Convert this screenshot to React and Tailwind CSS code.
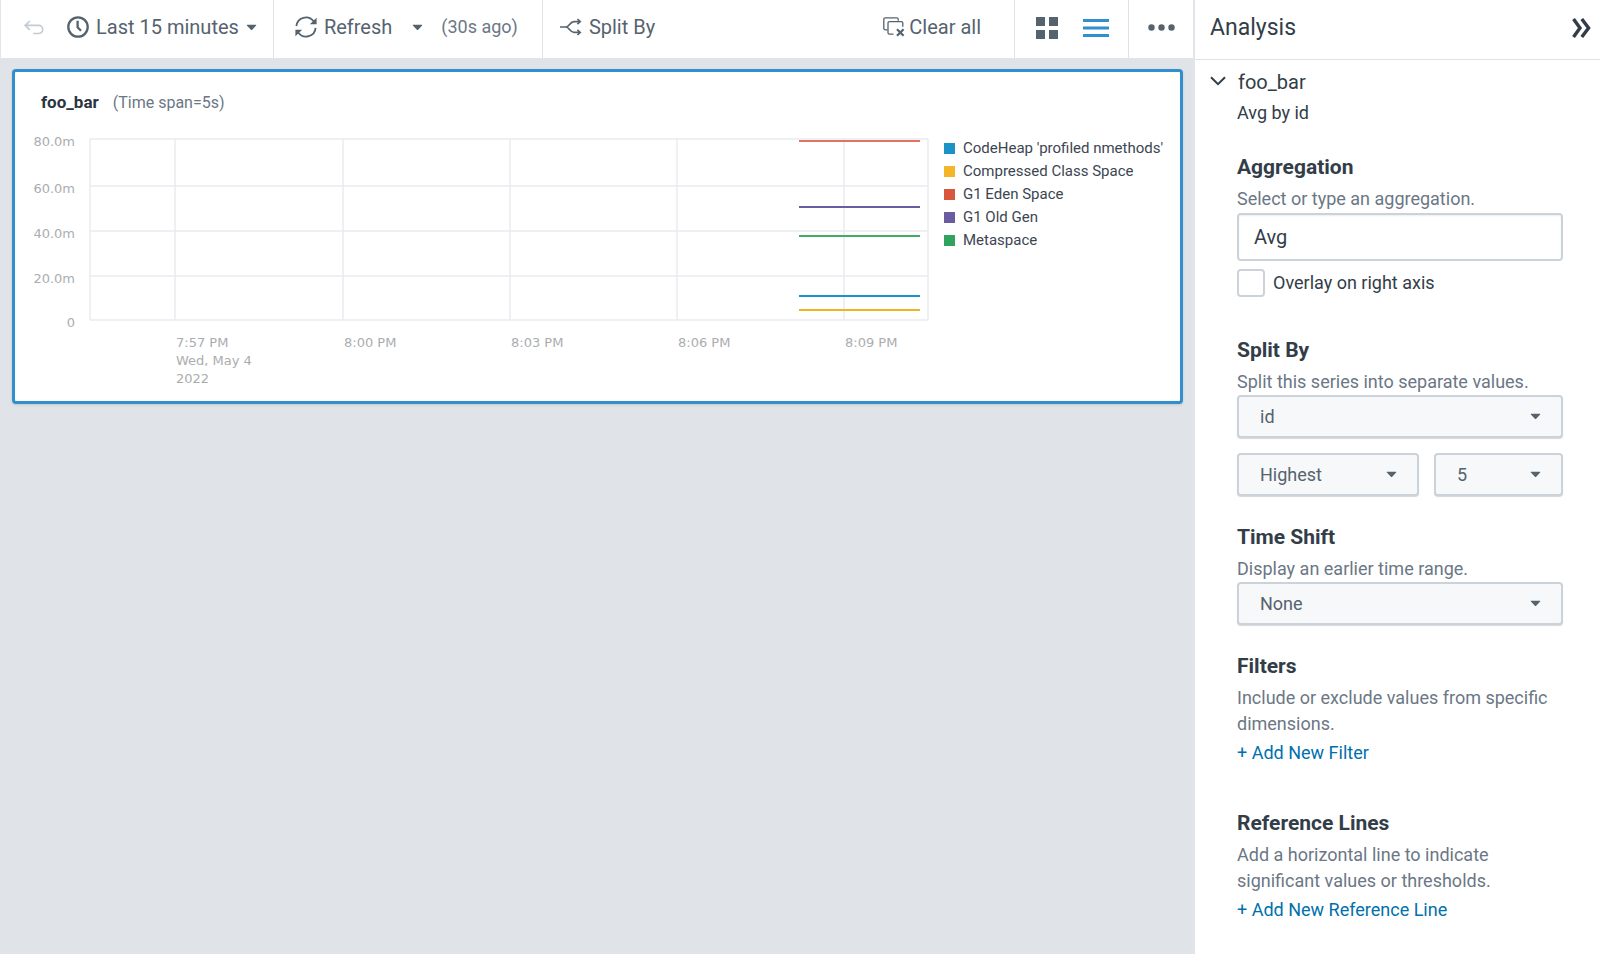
import { useState } from "react";

const series = [
  { name: "CodeHeap 'profiled nmethods'", y: 167, stroke: "#1a93c8", swatch: "bg-[#1a93c8]" },
  { name: "Compressed Class Space", y: 181, stroke: "#f0b323", swatch: "bg-[#f3b629]" },
  { name: "G1 Eden Space", y: 12, stroke: "#e0735f", swatch: "bg-[#d8573c]" },
  { name: "G1 Old Gen", y: 78, stroke: "#6b5ba0", swatch: "bg-[#6b5ba0]" },
  { name: "Metaspace", y: 107, stroke: "#41ac66", swatch: "bg-[#30a35f]" },
];

const yTicks = [
  { label: "80.0m", y: 10 },
  { label: "60.0m", y: 57 },
  { label: "40.0m", y: 102 },
  { label: "20.0m", y: 147 },
  { label: "0", y: 191 },
];

const xTicks = [
  { label: "7:57 PM", x: 145 },
  { label: "8:00 PM", x: 313 },
  { label: "8:03 PM", x: 480 },
  { label: "8:06 PM", x: 647 },
  { label: "8:09 PM", x: 814 },
];

function Caret({ className = "" }) {
  return (
    <svg viewBox="0 0 12 8" className={`h-[7px] w-[11px] shrink-0 ${className}`} fill="currentColor" aria-hidden="true">
      <path d="M1.2.8h9.6c.6 0 .9.6.5 1L6.8 6.6c-.4.5-1.1.5-1.5 0L.7 1.8c-.4-.4-.1-1 .5-1z" />
    </svg>
  );
}

function UndoIcon() {
  return (
    <svg viewBox="0 0 20 15" className="h-[15px] w-5" fill="none" stroke="currentColor" strokeWidth="1.7" aria-hidden="true">
      <path d="M5.8 1 1.2 5.4l4.6 4.4M1.2 5.4h13.4a4 4 0 0 1 0 8.1H9.2" />
    </svg>
  );
}

function ClockIcon() {
  return (
    <svg viewBox="0 0 22 22" className="size-[22px]" fill="none" stroke="currentColor" strokeWidth="2.3" aria-hidden="true">
      <circle cx="11" cy="11" r="9.700" />
      <path d="M10.600 4.800v6.500l3.400 3.400" />
    </svg>
  );
}

function RefreshIcon() {
  return (
    <svg viewBox="0 0 22 22" className="size-[22px]" fill="none" stroke="currentColor" strokeWidth="1.8" aria-hidden="true">
      <path d="M1.400 10.200A9.600 9.600 0 0 1 18.600 5.200M20.600 11.800A9.600 9.600 0 0 1 3.400 16.800" />
      <path d="M21.600 1.800v6.400h-6.800zM.4 20.200v-6.400h6.800z" fill="currentColor" stroke="none" />
    </svg>
  );
}

function SplitIcon() {
  return (
    <svg viewBox="0 0 22 18" className="h-[18px] w-[22px]" fill="none" stroke="currentColor" strokeWidth="1.7" aria-hidden="true">
      <path d="M0 9h5.800M20 3.600h-6C9.800 3.600 9.400 9 5.800 9c3.600 0 4 5.400 8.200 5.400h6" />
      <path d="m17.400 1 2.800 2.600-2.800 2.600M17.400 11.800l2.800 2.600-2.800 2.600" />
    </svg>
  );
}

function ClearIcon() {
  return (
    <svg viewBox="0 0 22 20" className="h-5 w-[22px]" fill="none" stroke="currentColor" aria-hidden="true">
      <path d="M4.500 12.800H2.200c-.8 0-1.400-.6-1.400-1.400V2.200c0-.8.6-1.400 1.400-1.400h11.600c.8 0 1.400.6 1.400 1.400v1.600" strokeWidth="1.300" />
      <path d="M10.500 17.200H6.400c-.8 0-1.400-.6-1.400-1.400V6c0-.8.6-1.400 1.400-1.400h12c.8 0 1.400.6 1.400 1.400v3.800" strokeWidth="1.300" />
      <path d="m14 12.200 6.600 6.600M20.600 12.200 14 18.800" strokeWidth="2.200" />
    </svg>
  );
}

function Toolbar({ view, onView }) {
  return (
    <header className="flex h-[58px] border-l border-[#e1e4e8] bg-white text-xl text-[#55636f]">
      <div className="flex items-center border-r border-[#dfe2e6] pr-4 pb-1 pl-[23px]">
        <button aria-label="Undo" className="text-[#c3cbd4]">
          <UndoIcon />
        </button>
        <button className="ml-[23px] flex items-center gap-[7px]">
          <ClockIcon />
          Last 15 minutes
          <Caret />
        </button>
      </div>
      <div className="flex items-center border-r border-[#dfe2e6] pr-6 pb-1 pl-[21px]">
        <button className="flex items-center gap-[7px]">
          <RefreshIcon />
          Refresh
        </button>
        <button aria-label="Refresh interval" className="ml-5">
          <Caret />
        </button>
        <span className="ml-[18px] text-lg text-[#6b7785]">(30s ago)</span>
      </div>
      <div className="flex flex-1 items-center justify-between pr-[33px] pb-1 pl-[17px]">
        <button className="flex items-center gap-[7px]">
          <SplitIcon />
          Split By
        </button>
        <button className="flex items-center gap-1">
          <ClearIcon />
          Clear all
        </button>
      </div>
      <div className="flex items-center gap-[25px] border-l border-[#dfe2e6] pr-[19px] pb-[3px] pl-[21px]">
        <button
          aria-label="Grid view"
          onClick={() => onView("grid")}
          className={view === "grid" ? "text-[#318fcb]" : "text-[#55636f]"}
        >
          <svg viewBox="0 0 22 22" className="size-[22px]" fill="currentColor" aria-hidden="true">
            <path d="M0 0h9v9H0zM13 0h9v9h-9zM0 13h9v9H0zM13 13h9v9h-9z" />
          </svg>
        </button>
        <button
          aria-label="List view"
          onClick={() => onView("list")}
          className={view === "list" ? "text-[#318fcb]" : "text-[#55636f]"}
        >
          <svg viewBox="0 0 26 20" className="h-5 w-[26px]" fill="currentColor" aria-hidden="true">
            <path d="M0 1h26v3H0zM0 8.500h26v3H0zM0 16h26v3H0z" />
          </svg>
        </button>
      </div>
      <div className="flex items-center border-l border-[#dfe2e6] pr-[18px] pb-[3px] pl-[19px]">
        <button aria-label="More actions">
          <svg viewBox="0 0 27 7" className="h-[7px] w-[27px]" fill="currentColor" aria-hidden="true">
            <circle cx="3.500" cy="3.500" r="3.200" />
            <circle cx="13.500" cy="3.500" r="3.200" />
            <circle cx="23.500" cy="3.500" r="3.200" />
          </svg>
        </button>
      </div>
    </header>
  );
}

function Chart() {
  return (
    <svg
      viewBox="0 0 904 272"
      className="min-w-0 flex-1 font-['DejaVu_Sans',sans-serif] text-[13px]"
      role="img"
      aria-label="foo_bar over the last 15 minutes"
    >
      <g stroke="#e9ebf0" strokeWidth="1.500">
        {yTicks.map((t) => (
          <line key={t.label} x1="60" x2="898" y1={t.y} y2={t.y} />
        ))}
        <line x1="60" x2="60" y1="10" y2="191" />
        {xTicks.map((t) => (
          <line key={t.label} x1={t.x} x2={t.x} y1="10" y2="191" />
        ))}
        <line x1="898" x2="898" y1="10" y2="191" />
      </g>
      <g fill="#aaadaf">
        {yTicks.map((t) => (
          <text key={t.label} x="45" y={t.y + 7} textAnchor="end">
            {t.label}
          </text>
        ))}
        {xTicks.map((t) => (
          <text key={t.label} x={t.x + 1} y="218">
            {t.label}
          </text>
        ))}
        <text x="146" y="236">Wed, May 4</text>
        <text x="146" y="254">2022</text>
      </g>
      {series.map((s) => (
        <line key={s.name} x1="769" x2="890" y1={s.y} y2={s.y} stroke={s.stroke} strokeWidth="2" />
      ))}
    </svg>
  );
}

function ChartCard() {
  return (
    <section className="mt-[11px] mr-2.5 mb-3 ml-3 rounded-sm border-3 border-[#318fcb] bg-white pl-[15px] shadow-sm">
      <h2 className="pt-[15px] pl-[11px] text-[17px] leading-[30px] text-[#6b7785]">
        <span className="mr-3.5 font-bold text-[#2a3541]">foo_bar</span>
        <span className="text-base">(Time span=5s)</span>
      </h2>
      <div className="mt-3 flex items-start">
        <Chart />
        <ul className="w-[246px] shrink-0 pt-2 pl-[10px] text-[15px] leading-[23px] text-[#3c4652]">
          {series.map((s) => (
            <li key={s.name} className="flex items-center gap-2 whitespace-nowrap">
              <span className={`size-[11px] shrink-0 ${s.swatch}`} />
              {s.name}
            </li>
          ))}
        </ul>
      </div>
    </section>
  );
}

function Section({ title, hint, className = "", children }) {
  return (
    <section className={className}>
      <h3 className="mb-1.5 text-[21px] leading-[26px] font-bold text-[#323d48]">{title}</h3>
      <p className="text-lg leading-[26px] text-[#6b7785]">{hint}</p>
      {children}
    </section>
  );
}

function Select({ label, options, className = "" }) {
  return (
    <div className={`relative ${className}`}>
      <select
        aria-label={label}
        className="block h-[43px] w-full appearance-none rounded border-2 border-[#cbd2da] bg-[#f7f8fa] pr-12 pl-[21px] text-lg text-[#55636f] shadow-[0_1px_1px_#d5d8dc]"
      >
        {options.map((o) => (
          <option key={o}>{o}</option>
        ))}
      </select>
      <Caret className="pointer-events-none absolute top-[18px] right-[22px] text-[#55636f]" />
    </div>
  );
}

function AnalysisPanel() {
  const [aggregation, setAggregation] = useState("Avg");
  const [overlay, setOverlay] = useState(false);

  return (
    <aside className="w-[407px] shrink-0 border-l-2 border-[#e1e4e8] bg-white text-[#323d48]">
      <div className="flex h-[60px] items-center justify-between border-b border-[#dfe2e6] pr-[9px] pb-[3px] pl-[15px]">
        <h1 className="text-[23px]">Analysis</h1>
        <button aria-label="Collapse panel">
          <svg viewBox="0 0 19 20" className="h-5 w-[19px]" fill="none" stroke="currentColor" strokeWidth="3.400" aria-hidden="true">
            <path d="m1.500 1 6.500 9-6.500 9M9.800 1l6.800 9-6.800 9" />
          </svg>
        </button>
      </div>
      <div className="pr-[37px] pl-[42px]">
        <button aria-expanded="true" className="-ml-[27px] flex items-center gap-3 pt-2 text-xl leading-[29px]">
          <svg viewBox="0 0 16 10" className="mb-[3px] h-[10px] w-4" fill="none" stroke="currentColor" strokeWidth="2" aria-hidden="true">
            <path d="m1 1.200 7 7 7-7" />
          </svg>
          foo_bar
        </button>
        <p className="text-lg leading-8">Avg by id</p>

        <Section title="Aggregation" hint="Select or type an aggregation." className="mt-[25px]">
          <input
            aria-label="Aggregation"
            value={aggregation}
            onChange={(e) => setAggregation(e.target.value)}
            className="mt-px block h-12 w-full rounded border-2 border-[#cbd2da] px-[15px] text-xl shadow-[inset_0_1px_2px_#eceef0]"
          />
          <label className="mt-2 flex items-center gap-2 text-lg leading-7">
            <input
              type="checkbox"
              checked={overlay}
              onChange={(e) => setOverlay(e.target.checked)}
              className="size-7 appearance-none rounded-sm border-2 border-[#cbd2da] checked:bg-[#318fcb]"
            />
            Overlay on right axis
          </label>
        </Section>

        <Section title="Split By" hint="Split this series into separate values." className="mt-10">
          <Select label="Split by dimension" options={["id", "area", "host"]} />
          <div className="mt-[15px] flex gap-[15px]">
            <Select label="Order" options={["Highest", "Lowest"]} className="w-[182px]" />
            <Select label="Limit" options={["5", "10", "20"]} className="flex-1" />
          </div>
        </Section>

        <Section title="Time Shift" hint="Display an earlier time range." className="mt-7">
          <Select label="Time shift" options={["None", "1 hour", "1 day"]} />
        </Section>

        <Section title="Filters" hint="Include or exclude values from specific dimensions." className="mt-7">
          <button className="mt-[3px] block text-lg leading-[26px] text-[#0070ad]">+ Add New Filter</button>
        </Section>

        <Section
          title="Reference Lines"
          hint="Add a horizontal line to indicate significant values or thresholds."
          className="mt-11"
        >
          <button className="mt-[3px] block text-lg leading-[26px] text-[#0070ad]">+ Add New Reference Line</button>
        </Section>
      </div>
    </aside>
  );
}

export default function App() {
  const [view, setView] = useState("list");

  return (
    <div className="flex min-h-screen bg-[#e0e4e8] font-[Roboto,sans-serif]">
      <main className="min-w-0 flex-1">
        <Toolbar view={view} onView={setView} />
        <ChartCard />
      </main>
      <AnalysisPanel />
    </div>
  );
}
